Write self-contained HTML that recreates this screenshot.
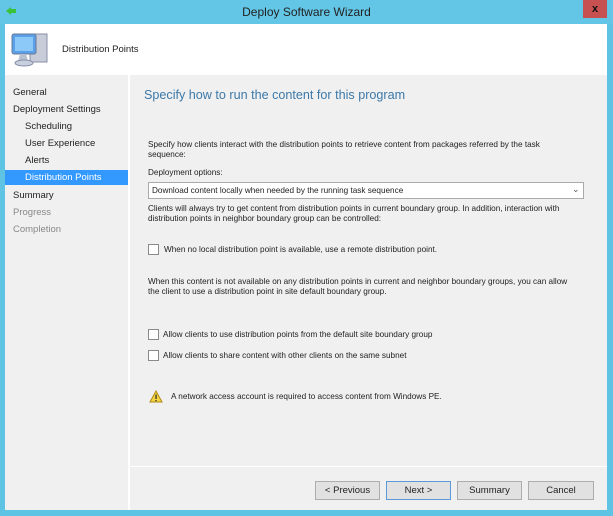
<!DOCTYPE html>
<html><head><style>
*{margin:0;padding:0;box-sizing:border-box}
body{width:613px;height:516px;background:#5fc4e4;font-family:"Liberation Sans",sans-serif;font-size:9.5px;color:#222;position:relative;overflow:hidden}
.a{position:absolute;white-space:nowrap}
.t{font-size:8.2px}
.cb{position:absolute;width:11px;height:11px;border:1px solid #8a8a8a;background:#fff}
.btn{position:absolute;top:481px;height:19px;border:1px solid #adadad;background:#e1e1e1;text-align:center;line-height:17px;font-size:9.5px}
</style></head><body>
<div class="a" style="left:0;top:0;width:613px;height:24px;background:#63c6e6"></div>
<svg class="a" style="left:5px;top:6px" width="12" height="10"><path d="M1 5 L6 1 L6 3 L11 3 L11 7 L6 7 L6 9 Z" fill="#3bc23b"/></svg>
<div class="a" style="left:0;width:613px;top:5px;text-align:center;font-size:12px;color:#222">Deploy Software Wizard</div>
<div class="a" style="left:583px;top:0;width:24px;height:18px;background:#c75050;color:#111;font-weight:bold;font-size:11px;text-align:center;line-height:18px">x</div>
<div class="a" style="left:5px;top:24px;width:602px;height:51px;background:#fff"></div>
<svg class="a" style="left:10px;top:30px" width="40" height="40"><rect x="20" y="4" width="17" height="28" fill="#c8ccd8" stroke="#8890a8"/><rect x="2" y="4" width="24" height="20" rx="2" fill="#5aa0e8" stroke="#6a7a98"/><rect x="5" y="7" width="18" height="14" fill="#8cc8f8"/><path d="M10 24 L16 24 L18 31 L8 31 Z" fill="#b8c0d0"/><ellipse cx="14" cy="33" rx="9" ry="3" fill="#c8d0e0" stroke="#8890a8"/></svg>
<div class="a" style="left:62px;top:44px;font-size:9.5px">Distribution Points</div>
<div class="a" style="left:5px;top:75px;width:123px;height:435px;background:#f0f0f0"></div>
<div class="a" style="left:128px;top:75px;width:2px;height:435px;background:#fff"></div>
<div class="a" style="left:130px;top:75px;width:477px;height:435px;background:#f0f0f0"></div>
<div class="a" style="left:130px;top:466px;width:477px;height:1px;background:#fff"></div>
<div class="a" style="left:13px;top:87px">General</div>
<div class="a" style="left:13px;top:104px">Deployment Settings</div>
<div class="a" style="left:25px;top:121px">Scheduling</div>
<div class="a" style="left:25px;top:138px">User Experience</div>
<div class="a" style="left:25px;top:155px">Alerts</div>
<div class="a" style="left:5px;top:170px;width:123px;height:15px;background:#3399ff"></div>
<div class="a" style="left:25px;top:172px;color:#fff">Distribution Points</div>
<div class="a" style="left:13px;top:190px">Summary</div>
<div class="a" style="left:13px;top:207px;color:#888">Progress</div>
<div class="a" style="left:13px;top:224px;color:#888">Completion</div>
<div class="a" style="left:144px;top:88px;font-size:12.6px;color:#3c78a8">Specify how to run the content for this program</div>
<div class="a t" style="left:148px;top:140px;line-height:10px">Specify how clients interact with the distribution points to retrieve content from packages referred by the task<br>sequence:</div>
<div class="a t" style="left:148px;top:168px">Deployment options:</div>
<div class="a" style="left:148px;top:182px;width:436px;height:17px;background:#fff;border:1px solid #aaa"></div>
<div class="a t" style="left:152px;top:186px">Download content locally when needed by the running task sequence</div>
<div class="a" style="left:572px;top:184px;font-size:9px;color:#555">&#8964;</div>
<div class="a t" style="left:148px;top:204px;line-height:10px">Clients will always try to get content from distribution points in current boundary group. In addition, interaction with<br>distribution points in neighbor boundary group can be controlled:</div>
<div class="cb" style="left:148px;top:244px"></div>
<div class="a t" style="left:164px;top:245px">When no local distribution point is available, use a remote distribution point.</div>
<div class="a t" style="left:148px;top:277px;line-height:10px">When this content is not available on any distribution points in current and neighbor boundary groups, you can allow<br>the client to use a distribution point in site default boundary group.</div>
<div class="cb" style="left:148px;top:329px"></div>
<div class="a t" style="left:163px;top:330px">Allow clients to use distribution points from the default site boundary group</div>
<div class="cb" style="left:148px;top:350px"></div>
<div class="a t" style="left:163px;top:351px">Allow clients to share content with other clients on the same subnet</div>
<svg class="a" style="left:149px;top:390px" width="14" height="13"><path d="M7 1 L13 12 L1 12 Z" fill="#f4d442" stroke="#b08a10"/><rect x="6.4" y="4.5" width="1.3" height="4.5" fill="#333"/><rect x="6.4" y="10" width="1.3" height="1.2" fill="#333"/></svg>
<div class="a t" style="left:171px;top:392px">A network access account is required to access content from Windows PE.</div>
<div class="btn" style="left:315px;width:65px">&lt; Previous</div>
<div class="btn" style="left:386px;width:65px;border-color:#5a9ad8">Next &gt;</div>
<div class="btn" style="left:457px;width:65px">Summary</div>
<div class="btn" style="left:528px;width:66px">Cancel</div>
</body></html>
